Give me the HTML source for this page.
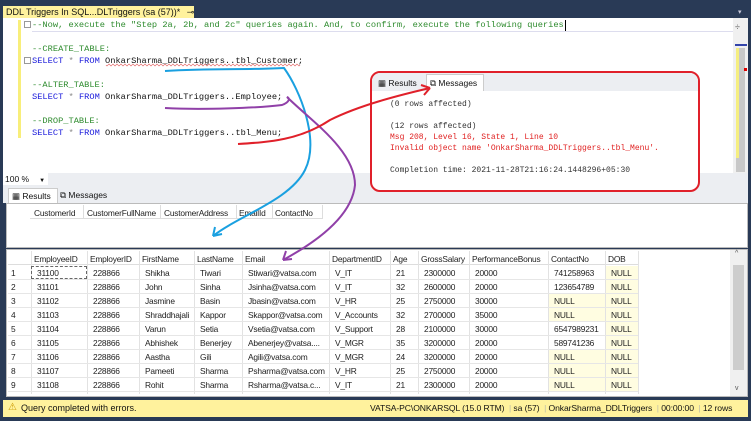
<!DOCTYPE html>
<html><head><meta charset="utf-8"><style>
*{margin:0;padding:0;box-sizing:border-box}
body{width:751px;height:421px;overflow:hidden;background:#293a56;position:relative;font-family:"Liberation Sans",sans-serif}
.a{position:absolute}
.code{font-family:"Liberation Mono",monospace;font-size:8.7px;white-space:pre;line-height:12px}
.g{color:#2e8b2e}.b{color:#1a1adb}.k{color:#111}.gr{color:#888}
.t{font-size:8.4px;color:#222;white-space:nowrap;letter-spacing:-0.2px}
</style></head><body>
<!-- tab -->
<div class="a" style="left:3px;top:6px;width:191px;height:13px;background:#fff29d;font-size:9px;color:#111;padding:1px 0 0 3px;white-space:nowrap;overflow:hidden">DDL Triggers In SQL...DLTriggers (sa (57))* <span style="margin-left:4px">⊸</span> <span style="margin-left:2px">✕</span></div>
<div class="a" style="left:738px;top:8px;color:#ccd;font-size:7px">▾</div>
<!-- editor -->
<div class="a" style="left:3px;top:18px;width:745px;height:155px;background:#fff"></div>
<div class="a" style="left:18px;top:20px;width:3px;height:118px;background:#f8ee7a"></div>
<div class="a" style="left:32px;top:31px;width:703px;height:1px;background:#dde"></div>
<div class="a" style="left:565px;top:20px;width:1px;height:11px;background:#000"></div>
<div class="a code" style="left:32px;top:19px"><span class="g">--Now, execute the "Step 2a, 2b, and 2c" queries again. And, to confirm, execute the following queries</span>

<span class="g">--CREATE_TABLE:</span>
<span class="b">SELECT</span> <span class="gr">*</span> <span class="b">FROM</span> <span class="k">OnkarSharma_DDLTriggers..tbl_Customer;</span>

<span class="g">--ALTER_TABLE:</span>
<span class="b">SELECT</span> <span class="gr">*</span> <span class="b">FROM</span> <span class="k">OnkarSharma_DDLTriggers..Employee;</span>

<span class="g">--DROP_TABLE:</span>
<span class="b">SELECT</span> <span class="gr">*</span> <span class="b">FROM</span> <span class="k">OnkarSharma_DDLTriggers..tbl_Menu;</span></div>
<div class="a" style="left:24px;top:21px;width:7px;height:7px;border:1px solid #999"></div>
<div class="a" style="left:24px;top:57px;width:7px;height:7px;border:1px solid #999"></div>
<!-- editor scrollbar -->
<div class="a" style="left:733px;top:18px;width:15px;height:155px;background:#f0f0f0"></div>
<div class="a" style="left:735px;top:22px;font-size:9px;color:#555">÷</div>
<div class="a" style="left:735px;top:44px;width:12px;height:2px;background:#3344aa"></div>
<div class="a" style="left:736px;top:48px;width:9px;height:124px;background:#c8c8c8"></div>
<div class="a" style="left:736px;top:48px;width:3px;height:110px;background:#f5ee80"></div>
<div class="a" style="left:744px;top:68px;width:3px;height:3px;background:#d00"></div>
<!-- zoom bar -->
<div class="a" style="left:3px;top:173px;width:745px;height:12px;background:#eceef2"></div>
<div class="a" style="left:3px;top:173px;width:45px;height:12px;background:#fff;font-size:8.5px;padding:1px 0 0 2px;color:#111">100 %<span style="margin-left:10px;font-size:6px">▼</span></div>
<!-- results tabs -->
<div class="a" style="left:3px;top:185px;width:745px;height:18px;background:#eceef2"></div>
<div class="a" style="left:8px;top:188px;width:50px;height:15px;background:#fff;border:1px solid #ccc;border-bottom:none;font-size:8.5px;padding:2px 0 0 3px;color:#111">▦ Results</div>
<div class="a" style="left:60px;top:190px;font-size:8.5px;color:#111">⧉ Messages</div>
<!-- grid 1 -->
<div class="a" style="left:6px;top:203px;width:742px;height:45px;background:#fff;border:1px solid #bbb"></div>
<div class="a" style="left:30px;top:205px;width:292px;height:14px;border-bottom:1px solid #ddd"></div>
<div class="a t" style="left:34px;top:208px">CustomerId</div>
<div class="a t" style="left:87px;top:208px">CustomerFullName</div>
<div class="a t" style="left:164px;top:208px">CustomerAddress</div>
<div class="a t" style="left:239px;top:208px">EmailId</div>
<div class="a t" style="left:275px;top:208px">ContactNo</div>
<div class="a" style="left:83px;top:205px;width:1px;height:14px;background:#ddd"></div>
<div class="a" style="left:160px;top:205px;width:1px;height:14px;background:#ddd"></div>
<div class="a" style="left:236px;top:205px;width:1px;height:14px;background:#ddd"></div>
<div class="a" style="left:272px;top:205px;width:1px;height:14px;background:#ddd"></div>
<div class="a" style="left:322px;top:205px;width:1px;height:14px;background:#ddd"></div>
<!-- grid 2 -->
<div class="a" style="left:6px;top:249px;width:742px;height:148px;background:#fff;border:1px solid #bbb"></div>
<div class="a" style="left:730px;top:250px;width:17px;height:146px;background:#f0f0f0"></div>
<div class="a" style="left:733px;top:265px;width:11px;height:105px;background:#cdcdcd"></div>
<div class="a" style="left:735px;top:250px;font-size:7px;color:#555">^</div>
<div class="a" style="left:735px;top:385px;font-size:7px;color:#555">v</div>
<div id="g2"></div>
<!-- status bar -->
<div class="a" style="left:3px;top:400px;width:745px;height:17px;background:#fff29d"></div>
<div class="a" style="left:8px;top:402px;font-size:10px;color:#c90">⚠</div>
<div class="a" style="left:21px;top:403px;font-size:9px;color:#111">Query completed with errors.</div>
<div class="a" style="left:370px;top:403px;font-size:8.6px;color:#111;white-space:pre;letter-spacing:-0.1px">VATSA-PC\ONKARSQL (15.0 RTM)  <span style="color:#bba">|</span> sa (57)  <span style="color:#bba">|</span> OnkarSharma_DDLTriggers  <span style="color:#bba">|</span> 00:00:00  <span style="color:#bba">|</span> 12 rows</div>
<!-- messages popup -->
<div class="a" style="left:370px;top:71px;width:330px;height:121px;background:#fff;border:2px solid #e0202a;border-radius:10px;overflow:hidden">
 <div class="a" style="left:0;top:0;width:330px;height:18px;background:#eceef2"></div>
 <div class="a" style="left:6px;top:5px;font-size:8.5px;color:#111">▦ Results</div>
 <div class="a" style="left:54px;top:1px;width:58px;height:17px;background:#fff;border:1px solid #ccc;border-bottom:none;font-size:8.5px;padding:3px 0 0 3px;color:#111">⧉ Messages</div>
 <div class="a code" style="left:18px;top:26px;font-size:8px;line-height:11px;color:#333">(0 rows affected)

(12 rows affected)
<span style="color:#e02020">Msg 208, Level 16, State 1, Line 10
Invalid object name 'OnkarSharma_DDLTriggers..tbl_Menu'.</span>

Completion time: 2021-11-28T21:16:24.1448296+05:30</div>
</div>
<!-- annotations -->
<svg class="a" style="left:0;top:0" width="751" height="421">
 <path d="M165 71 C210 68 250 70 284 68 C300 90 320 140 305 170 C290 200 240 215 213 236" fill="none" stroke="#1aa0e0" stroke-width="2"/>
 <path d="M213 236 l2 -9 M213 236 l9 -2" stroke="#1aa0e0" stroke-width="2"/>
 <path d="M165 108 C200 110 260 108 282 105 C290 102 290 98 287 97 C310 120 355 150 355 185 C352 215 320 240 283 260" fill="none" stroke="#9040a8" stroke-width="2"/>
 <path d="M283 260 l3 -9 M283 260 l9 -1" stroke="#9040a8" stroke-width="2"/>
 <path d="M238 144 C270 142 300 140 330 120 C360 105 400 95 430 88" fill="none" stroke="#e0202a" stroke-width="2"/>
 <path d="M430 88 l-9 -3 M430 88 l-6 7" stroke="#e0202a" stroke-width="2"/>
 <path d="M106 65 q1 2 2 0 q1 -2 2 0 q1 2 2 0 q1 -2 2 0 q1 2 2 0 q1 -2 2 0 q1 2 2 0 q1 -2 2 0 q1 2 2 0 q1 -2 2 0 q1 2 2 0 q1 -2 2 0 q1 2 2 0 q1 -2 2 0 q1 2 2 0 q1 -2 2 0 q1 2 2 0 q1 -2 2 0 q1 2 2 0 q1 -2 2 0 q1 2 2 0 q1 -2 2 0 q1 2 2 0 q1 -2 2 0 q1 2 2 0 q1 -2 2 0 q1 2 2 0 q1 -2 2 0 q1 2 2 0 q1 -2 2 0 q1 2 2 0 q1 -2 2 0 q1 2 2 0 q1 -2 2 0 q1 2 2 0 q1 -2 2 0 q1 2 2 0 q1 -2 2 0 q1 2 2 0 q1 -2 2 0 q1 2 2 0 q1 -2 2 0 q1 2 2 0 q1 -2 2 0 q1 2 2 0 q1 -2 2 0 q1 2 2 0 q1 -2 2 0 q1 2 2 0 q1 -2 2 0 q1 2 2 0 q1 -2 2 0 q1 2 2 0 q1 -2 2 0 q1 2 2 0 q1 -2 2 0 q1 2 2 0 q1 -2 2 0 q1 2 2 0 q1 -2 2 0 q1 2 2 0 q1 -2 2 0 q1 2 2 0 q1 -2 2 0 q1 2 2 0 q1 -2 2 0 q1 2 2 0 q1 -2 2 0 q1 2 2 0 q1 -2 2 0 q1 2 2 0 q1 -2 2 0 q1 2 2 0 q1 -2 2 0 q1 2 2 0 q1 -2 2 0 q1 2 2 0 q1 -2 2 0 q1 2 2 0 q1 -2 2 0 q1 2 2 0 q1 -2 2 0 q1 2 2 0 q1 -2 2 0 q1 2 2 0 q1 -2 2 0 q1 2 2 0 q1 -2 2 0 q1 2 2 0 q1 -2 2 0 q1 2 2 0 q1 -2 2 0 q1 2 2 0 q1 -2 2 0 q1 2 2 0 q1 -2 2 0 q1 2 2 0" fill="none" stroke="#e05050" stroke-width="0.6"/>
</svg>
<script>
var cols=[[31,"EmployeeID"],[87,"EmployerID"],[139,"FirstName"],[194,"LastName"],[242,"Email"],[329,"DepartmentID"],[390,"Age"],[418,"GrossSalary"],[469,"PerformanceBonus"],[548,"ContactNo"],[605,"DOB"],[638,""]];
var d=[["31100","228866","Shikha","Tiwari","Stiwari@vatsa.com","V_IT","21","2300000","20000","741258963","NULL"],
["31101","228866","John","Sinha","Jsinha@vatsa.com","V_IT","32","2600000","20000","123654789","NULL"],
["31102","228866","Jasmine","Basin","Jbasin@vatsa.com","V_HR","25","2750000","30000","NULL","NULL"],
["31103","228866","Shraddhajali","Kappor","Skappor@vatsa.com","V_Accounts","32","2700000","35000","NULL","NULL"],
["31104","228866","Varun","Setia","Vsetia@vatsa.com","V_Support","28","2100000","30000","6547989231","NULL"],
["31105","228866","Abhishek","Benerjey","Abenerjey@vatsa....","V_MGR","35","3200000","20000","589741236","NULL"],
["31106","228866","Aastha","Gili","Agili@vatsa.com","V_MGR","24","3200000","20000","NULL","NULL"],
["31107","228866","Pameeti","Sharma","Psharma@vatsa.com","V_HR","25","2750000","20000","NULL","NULL"],
["31108","228866","Rohit","Sharma","Rsharma@vatsa.c...","V_IT","21","2300000","20000","NULL","NULL"]];
var h="";
h+='<div class="a" style="left:8px;top:251px;width:630px;height:14px;border-bottom:1px solid #ddd"></div>';
for(var i=0;i<11;i++){h+='<div class="a t" style="left:'+(cols[i][0]+3)+'px;top:254px">'+cols[i][1]+'</div>';
h+='<div class="a" style="left:'+cols[i][0]+'px;top:251px;width:1px;height:143px;background:#e2e2e2"></div>';}
h+='<div class="a" style="left:638px;top:251px;width:1px;height:143px;background:#e2e2e2"></div>';
for(var r=0;r<9;r++){var y=266+r*14;
h+='<div class="a" style="left:8px;top:'+(y+13)+'px;width:630px;height:1px;background:#e6e6e6"></div>';
h+='<div class="a t" style="left:11px;top:'+(y+2)+'px">'+(r+1)+'</div>';
for(var i=0;i<11;i++){var v=d[r][i];var w=cols[i+1][0]-cols[i][0];
var bg=(v=="NULL")?"background:#fffde1;":"";
h+='<div class="a t" style="'+bg+'left:'+(cols[i][0]+1)+'px;top:'+y+'px;width:'+(w-1)+'px;height:13px;padding:2px 0 0 5px">'+v+'</div>';}}
h+='<div class="a" style="left:31px;top:266px;width:56px;height:13px;border:1px dashed #666"></div>';
document.getElementById("g2").innerHTML=h;
</script>
</body></html>
